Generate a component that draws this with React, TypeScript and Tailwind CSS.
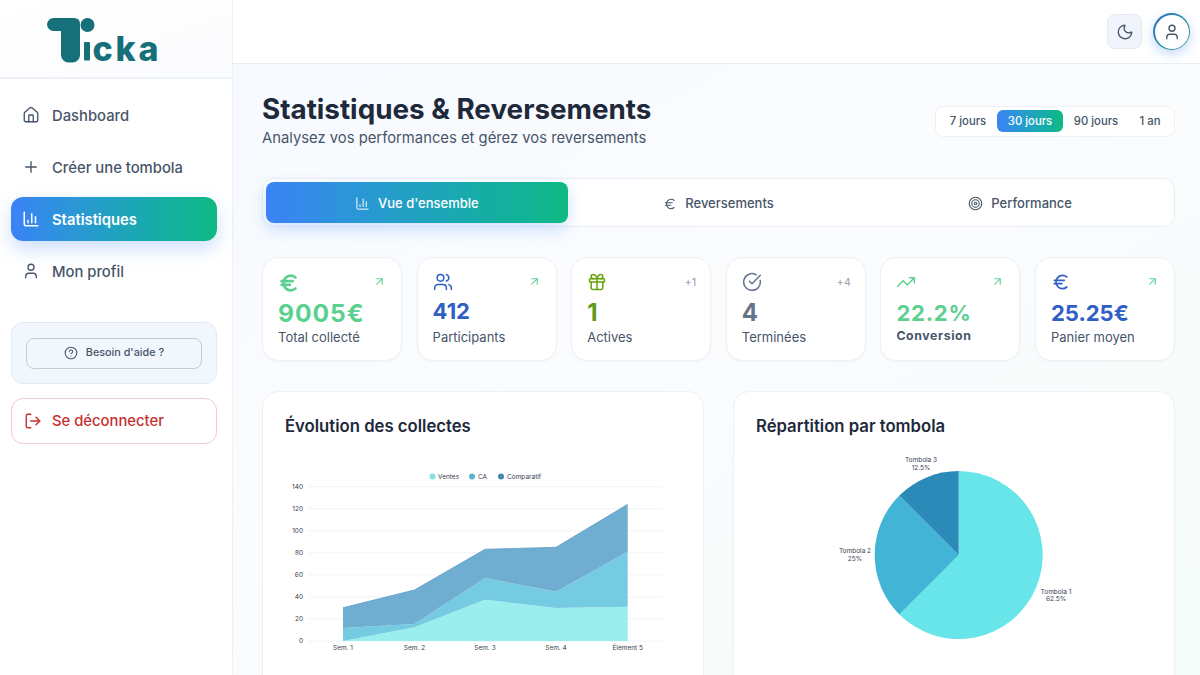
import React from "react";
import { House, Plus, ChartColumn, User, CircleHelp, LogOut, Moon, Euro, Target, Users, Gift, CircleCheckBig, TrendingUp, ArrowUpRight } from "lucide-react";

const font = { fontFamily: "Inter, 'Liberation Sans', sans-serif" };

function Logo() {
  return (
    <svg width="120" height="52" viewBox="0 0 120 52" className="block">
      <path d="M6.500 1 H26 C31 1 33 3 33 7 V38 a7.500 7.500 0 0 1 -7.500 7.500 h-4 a7.500 7.500 0 0 1 -7.500 -7.500 V14 H6.500 a6.500 6.500 0 0 1 0 -13 Z" fill="#16707a" />
      <circle cx="40.500" cy="8" r="7" fill="#16707a" />
      <rect x="37" y="25" width="6" height="18.500" rx="1" fill="#16707a" />
      <text x="45.500" y="43.500" fontFamily="Inter, sans-serif" fontWeight="800" fontSize="34" fill="#16707a" letterSpacing="2.8">cka</text>
    </svg>
  );
}

function NavItem({ icon: Icon, label, active }: { icon: any; label: string; active?: boolean }) {
  return (
    <div className={active
      ? "h-11 rounded-xl flex items-center px-[11px] gap-[12px] bg-gradient-to-r from-[#3b82f6] to-[#10b981] text-white font-semibold shadow-[0_8px_18px_rgba(59,130,246,0.25)]"
      : "h-11 rounded-xl flex items-center px-[11px] gap-[12px] text-[#475569] font-medium"}>
      <Icon size={18} strokeWidth={active ? 2 : 1.8} />
      <span className="text-[14.8px] pt-[2px]">{label}</span>
    </div>
  );
}

function Stat({ icon: Icon, iconSize = 20, iconStroke = 1.8, iconCls, value, valueCls, label, labelCls, trend }: any) {
  return (
    <div className="h-[104px] rounded-2xl bg-white border border-[#edf1f7] pl-[15px] pr-[14px] pt-[14px] shadow-[0_1px_3px_rgba(15,23,42,0.03)]">
      <div className="flex items-start justify-between h-[26px]">
        <Icon size={iconSize} strokeWidth={iconStroke} className={iconCls} />
        {trend ? (
          <span className="text-[11px] mt-[2px] text-[#9ca3af]">{trend}</span>
        ) : (
          <ArrowUpRight size={13} strokeWidth={2} className="mt-[3px] mr-[1px] text-[#5cd08f]" />
        )}
      </div>
      <div className={valueCls}>{value}</div>
      <div className={labelCls}>{label}</div>
    </div>
  );
}

const W = [343, 414.5, 485, 556, 627.7];
const ventes = [641, 627.3, 599.7, 608, 606.7];
const ca = [628, 624, 578, 591.7, 551.7];
const comp = [607.7, 590, 549.3, 547.3, 504.3];
const OX = 285, OY = 465;
const pts = (a: number[]) => a.map((y, i) => `${W[i] - OX},${y - OY}`).join(" ");
const between = (top: number[], bottom: number[]) =>
  pts(top) + " " + [...bottom].reverse().map((y, i) => `${W[4 - i] - OX},${y - OY}`).join(" ");

function AreaChart() {
  const ticks = [0, 20, 40, 60, 80, 100, 120, 140];
  const labels = ["Sem. 1", "Sem. 2", "Sem. 3", "Sem. 4", "Élément 5"];
  return (
    <svg width="385" height="195" viewBox="0 0 385 195" className="block" fontFamily="Inter, sans-serif">
      <circle cx="147.500" cy="11.500" r="3" fill="#86e0e0" />
      <text x="153" y="13.800" fontSize="6.500" fill="#374151">Ventes</text>
      <circle cx="187" cy="11.500" r="3" fill="#5ab4cf" />
      <text x="193" y="13.800" fontSize="6.500" fill="#374151">CA</text>
      <circle cx="216" cy="11.500" r="3" fill="#3f88ae" />
      <text x="222" y="13.800" fontSize="6.500" fill="#374151">Comparatif</text>
      {ticks.map((t) => {
        const y = 641 - t * 1.102 - OY;
        return (
          <g key={t}>
            <line x1="23" x2="378" y1={y} y2={y} stroke="#f1f3f6" strokeWidth="1" />
            <text x="18" y={y + 2.300} fontSize="6.500" textAnchor="end" fill="#374151">{t}</text>
          </g>
        );
      })}
      <polygon points={between(ventes, ventes.map(() => 641))} fill="#9beeee" />
      <polygon points={between(ca, ventes)} fill="#74cbe2" />
      <polygon points={between(comp, ca)} fill="#6faed1" />
      <polyline points={pts(comp)} fill="none" stroke="#5d9dc2" strokeWidth="0.800" />
      {labels.map((l, i) => (
        <text key={l} x={W[i] - OX} y={184.500} fontSize="6.500" textAnchor="middle" fill="#374151">{l}</text>
      ))}
    </svg>
  );
}

function PieChart() {
  const cx = 138.7, cy = 109, r = 84;
  const p = (deg: number) => {
    const a = (deg * Math.PI) / 180;
    return `${cx + r * Math.sin(a)} ${cy - r * Math.cos(a)}`;
  };
  const T = ({ x, y, a, b }: { x: number; y: number; a: string; b: string }) => (
    <text fontSize="6.500" textAnchor="middle" fill="#374151">
      <tspan x={x} y={y}>{a}</tspan>
      <tspan x={x} y={y + 7.500}>{b}</tspan>
    </text>
  );
  return (
    <svg width="270" height="230" viewBox="0 0 270 230" className="block" fontFamily="Inter, sans-serif">
      <path d={`M${cx} ${cy} L${p(0)} A${r} ${r} 0 1 1 ${p(225)} Z`} fill="#67e5e9" />
      <path d={`M${cx} ${cy} L${p(225)} A${r} ${r} 0 0 1 ${p(315)} Z`} fill="#42b5d6" />
      <path d={`M${cx} ${cy} L${p(315)} A${r} ${r} 0 0 1 ${p(360)} Z`} fill="#2b8ab8" />
      <T x={101} y={16} a="Tombola 3" b="12.5%" />
      <T x={35} y={107} a="Tombola 2" b="25%" />
      <T x={236} y={147.500} a="Tombola 1" b="62.5%" />
    </svg>
  );
}

export default function App() {
  const label = "text-[13px] leading-[20px] -mt-[1px] text-[#475569]";
  return (
    <div style={font} className="w-[1200px] h-[675px] overflow-hidden flex bg-gradient-to-br from-[#f4f8fe] via-[#fbfcfe] to-[#f4fbf8]">
      <aside className="w-[233px] shrink-0 h-full bg-white border-r border-[#eef1f6] flex flex-col">
        <div className="h-[79px] border-b-2 border-[#eef1f5] pl-[47px] pt-[17px] bg-gradient-to-br from-white to-[#fafbfd]">
          <Logo />
        </div>
        <nav className="pl-[11px] pr-[15px] pt-[14px] flex flex-col gap-2">
          <NavItem icon={House} label="Dashboard" />
          <NavItem icon={Plus} label="Créer une tombola" />
          <NavItem icon={ChartColumn} label="Statistiques" active />
          <NavItem icon={User} label="Mon profil" />
        </nav>
        <div className="ml-[11px] mr-[15px] mt-[29px] h-[62px] rounded-xl bg-[#f2f6fd] border border-[#e3eaf5] flex items-center justify-center">
          <div className="w-[176px] h-[31px] rounded-lg border border-[#c3ccd9] flex items-center justify-center gap-2 text-[10.8px] font-medium text-[#475569]">
            <CircleHelp size={14} strokeWidth={1.8} />
            <span>Besoin d'aide ?</span>
          </div>
        </div>
        <div className="ml-[11px] mr-[15px] mt-[14px] h-[46px] rounded-xl bg-white border border-[#f3c9c9] flex items-center pl-[12px] gap-[10px] text-[#c53030]">
          <LogOut size={18} strokeWidth={1.9} />
          <span className="text-[14.8px] font-medium">Se déconnecter</span>
        </div>
      </aside>

      <div className="flex-1 min-w-0 flex flex-col">
        <header className="h-[64px] shrink-0 bg-white border-b border-[#e9edf3] flex items-center justify-end pr-[10px] gap-[11px]">
          <div className="w-[35px] h-[35px] rounded-lg bg-[#f1f5fb] border border-[#e4e9f2] flex items-center justify-center text-[#475569]">
            <Moon size={18} strokeWidth={1.8} />
          </div>
          <div className="w-[37px] h-[37px] rounded-full p-[1.5px] bg-gradient-to-br from-[#2f72c4] to-[#2f9a80] shadow-[0_4px_12px_rgba(59,130,246,0.3)]">
            <div className="w-full h-full rounded-full bg-white flex items-center justify-center text-[#475569]">
              <User size={18} strokeWidth={1.8} />
            </div>
          </div>
        </header>

        <main className="flex-1 min-h-0 pl-[29px] pr-[25px] pt-[28px]">
          <div className="flex items-center justify-between h-[58px]">
            <div>
              <h1 className="text-[27.8px] leading-[35px] font-bold text-[#1e293b]">Statistiques &amp; Reversements</h1>
              <p className="text-[14.8px] leading-[23px] text-[#475569]">Analysez vos performances et gérez vos reversements</p>
            </div>
            <div className="w-[240px] h-[31px] rounded-lg bg-white border border-[#edf1f6] flex items-center px-[3px] text-[11.3px] font-medium text-[#475569]">
              <span className="w-[58px] shrink-0 text-center">7 jours</span>
              <span className="w-[66px] shrink-0 h-[22px] rounded-md bg-gradient-to-r from-[#3b82f6] to-[#10b981] text-white flex items-center justify-center">30 jours</span>
              <span className="w-[66px] shrink-0 text-center">90 jours</span>
              <span className="w-[42px] shrink-0 text-center">1 an</span>
            </div>
          </div>

          <div className="mt-[28px] h-[49px] rounded-xl bg-white border border-[#ebeff5] p-[3px] grid grid-cols-3 text-[13px] font-medium text-[#475569]">
            <div className="rounded-lg bg-gradient-to-r from-[#3b82f6] to-[#10b981] text-white flex items-center justify-center gap-2 pt-[2px] shadow-[0_6px_16px_rgba(59,130,246,0.25)]">
              <ChartColumn size={15} strokeWidth={1.6} />
              <span>Vue d'ensemble</span>
            </div>
            <div className="flex items-center justify-center gap-2 pt-[2px]">
              <Euro size={14} strokeWidth={1.8} />
              <span>Reversements</span>
            </div>
            <div className="flex items-center justify-center gap-2 pt-[2px]">
              <Target size={15} strokeWidth={1.8} />
              <span>Performance</span>
            </div>
          </div>

          <div className="mt-[30px] grid grid-cols-6 gap-[14.6px]">
            <Stat icon={Euro} iconSize={22} iconStroke={3} iconCls="text-[#5cd08f]" trend={null} value="9005€" valueCls="text-[24.6px] leading-[30px] font-bold tracking-[0.04em] text-[#5cd08f]" label="Total collecté" labelCls={label} />
            <Stat icon={Users} iconCls="text-[#2f5fc4]" trend={null} value="412" valueCls="text-[22px] leading-[30px] font-bold text-[#2f5fc4] -mt-[2px]" label="Participants" labelCls="text-[13px] leading-[20px] mt-[1px] text-[#475569]" />
            <Stat icon={Gift} iconCls="text-[#65a30d]" trend="+1" value="1" valueCls="text-[24px] leading-[30px] font-bold text-[#5f9a1e]" label="Actives" labelCls={label} />
            <Stat icon={CircleCheckBig} iconCls="text-[#64748b]" trend="+4" value="4" valueCls="text-[24px] leading-[30px] font-bold text-[#64748b]" label="Terminées" labelCls={label} />
            <Stat icon={TrendingUp} iconCls="text-[#5cd08f]" trend={null} value="22.2%" valueCls="text-[22px] leading-[30px] font-bold tracking-[0.035em] text-[#5cd08f]" label="Conversion" labelCls="text-[12.3px] leading-[18px] -mt-[1px] font-bold tracking-[0.05em] text-[#475569]" />
            <Stat icon={Euro} iconStroke={2} iconCls="text-[#2f5fc4]" trend={null} value="25.25€" valueCls="text-[22px] leading-[30px] font-bold text-[#2f5fc4]" label="Panier moyen" labelCls={label} />
          </div>

          <div className="mt-[30px] grid grid-cols-2 gap-[29px]">
            <div className="h-[320px] rounded-2xl bg-white border border-[#edf1f7] pl-[22px] pt-[21px]">
              <h2 className="text-[16.7px] leading-[26px] font-semibold text-[#1e293b]">Évolution des collectes</h2>
              <div className="mt-[26px]"><AreaChart /></div>
            </div>
            <div className="h-[320px] rounded-2xl bg-white border border-[#edf1f7] pl-[22px] pt-[21px]">
              <h2 className="text-[16.7px] leading-[26px] font-semibold text-[#1e293b]">Répartition par tombola</h2>
              <div className="ml-[64px] mt-[7px]"><PieChart /></div>
            </div>
          </div>
        </main>
      </div>
    </div>
  );
}
